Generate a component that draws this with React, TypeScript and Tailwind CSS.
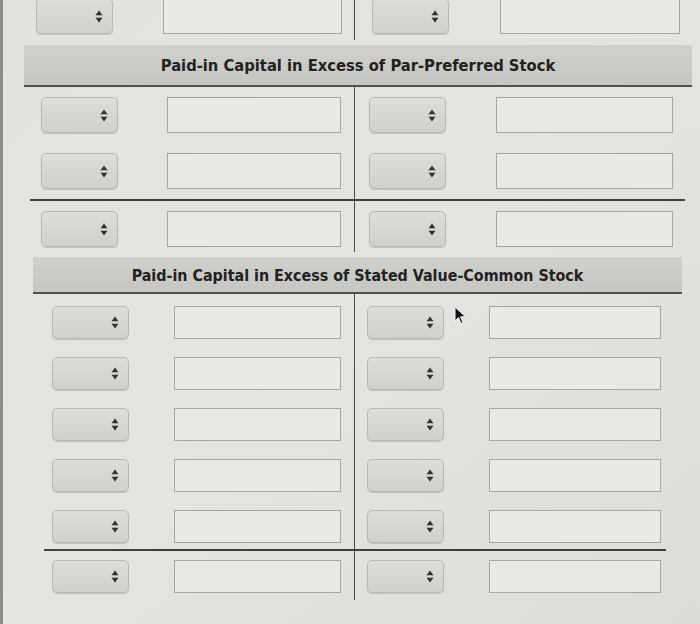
const font = { fontFamily: '"DejaVu Sans Condensed", "DejaVu Sans", Verdana, sans-serif', fontStretch: "condensed" };

function Arrows() {
  return (
    <svg width="8" height="13" viewBox="0 0 8 13" className="shrink-0">
      <path d="M4 0.5 L7.5 5.2 L0.5 5.2 Z" fill="#333" />
      <path d="M4 12.5 L7.5 7.8 L0.5 7.8 Z" fill="#333" />
    </svg>
  );
}

function Select({ tall }: { tall?: boolean }) {
  return (
    <div
      className={`flex w-[77px] shrink-0 items-center justify-end rounded-[5px] border border-[#b8b8b5] bg-gradient-to-b from-[#dddddA] to-[#d0d0cd] pr-[9px] shadow-[0_1px_1px_rgba(0,0,0,0.15)] ${
        tall ? "h-[36px]" : "h-[33px]"
      }`}
    >
      <Arrows />
    </div>
  );
}

function Field({ className }: { className: string }) {
  return <div className={`shrink-0 border border-[#a6a6a3] bg-[#e9e9e6] ${className}`} />;
}

type RowLayout = {
  left: string; // padding before the left select
  leftGap: string; // margin before the left input
  leftInput: string; // width of the left input
  rightPad: string;
  rightGap: string;
  rightInput: string;
  tall?: boolean;
};

const topRow: RowLayout = {
  left: "pl-[36px]",
  leftGap: "ml-[50px]",
  leftInput: "w-[179px] h-[36px]",
  rightPad: "pl-[17px]",
  rightGap: "ml-[51px]",
  rightInput: "w-[180px] h-[36px]",
  tall: true,
};

const preferredRow: RowLayout = {
  left: "pl-[41px]",
  leftGap: "ml-[49px]",
  leftInput: "w-[174px] h-[36px]",
  rightPad: "pl-[14px]",
  rightGap: "ml-[50px]",
  rightInput: "w-[177px] h-[36px]",
  tall: true,
};

const commonRow: RowLayout = {
  left: "pl-[52px]",
  leftGap: "ml-[45px]",
  leftInput: "w-[167px] h-[33px]",
  rightPad: "pl-[12px]",
  rightGap: "ml-[45px]",
  rightInput: "w-[172px] h-[33px]",
};

function Row({ layout, pad }: { layout: RowLayout; pad: string }) {
  return (
    <div className="flex">
      <div className={`flex w-[355px] items-start border-r border-[#4a4a48] ${layout.left} ${pad}`}>
        <Select tall={layout.tall} />
        <Field className={`${layout.leftGap} ${layout.leftInput}`} />
      </div>
      <div className={`flex items-start ${layout.rightPad} ${pad}`}>
        <Select tall={layout.tall} />
        <Field className={`${layout.rightGap} ${layout.rightInput}`} />
      </div>
    </div>
  );
}

function Header({ title, className }: { title: string; className: string }) {
  return (
    <div
      className={`flex items-center justify-center border-b-2 border-[#505050] bg-gradient-to-b from-[#d0d0cd] to-[#c6c6c3] pt-[3px] font-bold text-[#222] ${className}`}
      style={font}
    >
      {title}
    </div>
  );
}

export default function App() {
  return (
    <div className="relative h-[624px] w-[700px] overflow-hidden border-l-[3px] border-[#8c8c8a] bg-gradient-to-br from-[#e2e2df] via-[#e4e4e1] to-[#dcdcd9]">
      {/* top of the previous account, cut by the screen edge */}
      <div className="-mt-[2px] ml-[-3px]">
        <Row layout={topRow} pad="pb-[6px]" />
      </div>

      <div className="ml-[-3px] pt-[5px]">
        <Header
          title="Paid-in Capital in Excess of Par-Preferred Stock"
          className="ml-[24px] h-[42px] w-[668px] text-[16.4px]"
        />
        <Row layout={preferredRow} pad="pt-[10px] pb-[10px]" />
        <Row layout={preferredRow} pad="pt-[10px] pb-[10px]" />
        <div className="ml-[30px] h-[2px] w-[655px] bg-[#3f3f3d]" />
        <Row layout={preferredRow} pad="pt-[10px] pb-[5px]" />
      </div>

      <div className="ml-[-3px] pt-[5px]">
        <Header
          title="Paid-in Capital in Excess of Stated Value-Common Stock"
          className="ml-[33px] h-[37px] w-[649px] text-[15.9px]"
        />
        <Row layout={commonRow} pad="pt-[12px] pb-[9px]" />
        <Row layout={commonRow} pad="pt-[9px] pb-[9px]" />
        <Row layout={commonRow} pad="pt-[9px] pb-[9px]" />
        <Row layout={commonRow} pad="pt-[9px] pb-[9px]" />
        <Row layout={commonRow} pad="pt-[9px] pb-[6px]" />
        <div className="ml-[44px] h-[2px] w-[622px] bg-[#3f3f3d]" />
        <Row layout={commonRow} pad="pt-[9px] pb-[7px]" />
      </div>

      {/* mouse pointer */}
      <svg className="absolute left-[451px] top-[306px]" width="14" height="20" viewBox="0 0 14 20">
        <path d="M1 1 L1 15 L4.5 11.5 L7 17.5 L9 16.6 L6.6 10.8 L11.5 10.8 Z" fill="#111" stroke="#f4f4f4" strokeWidth="1" />
      </svg>
    </div>
  );
}
